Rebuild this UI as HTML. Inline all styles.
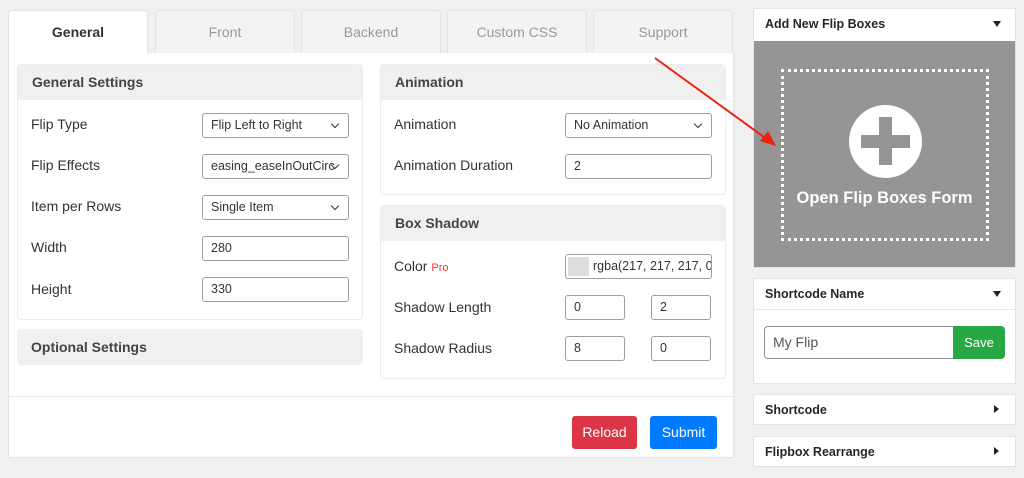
<!DOCTYPE html>
<html><head><style>
*{box-sizing:border-box}
body{margin:0;width:1024px;height:478px;background:#f0f0f1;font-family:"Liberation Sans",sans-serif;position:relative;overflow:hidden;color:#3c434a}
.a{position:absolute}
.tab{position:absolute;top:10px;height:43px;width:140px;background:#f3f3f3;border:1px solid #e3e3e3;border-bottom:none;border-radius:4px 4px 0 0;text-align:center;line-height:43px;font-size:14px;color:#999}
.box{position:absolute;background:#fff;border:1px solid #ececec;border-radius:4px}
.hd{background:#f0f0f0;height:35px;line-height:35px;padding-left:14px;font-weight:bold;font-size:14px;color:#444;border-radius:4px 4px 0 0}
.lb{position:absolute;font-size:14px;color:#333}
.in{position:absolute;height:25px;border:1px solid #9aa0a6;border-radius:3px;font-size:12.5px;line-height:23px;padding-left:8px;color:#333;background:#fff;white-space:nowrap;overflow:hidden}
.sel:after{content:"";position:absolute;right:10px;top:7px;width:5px;height:5px;border-right:1.5px solid #333;border-bottom:1.5px solid #333;transform:rotate(45deg)}
.rb{position:absolute;background:#fff;border:1px solid #e3e3e3;left:753px;width:263px}
.rh{height:31px;line-height:31px;padding-left:11px;font-size:12.5px;font-weight:bold;color:#23282d;position:relative}
.dn:after{content:"";position:absolute;right:14px;top:12px;border-left:4px solid transparent;border-right:4px solid transparent;border-top:6px solid #222}
.rt:after{content:"";position:absolute;right:16px;top:10px;border-top:4px solid transparent;border-bottom:4px solid transparent;border-left:5px solid #222}
</style></head><body>
<div class="a" style="left:8px;top:53px;width:726px;height:405px;background:#fff;border:1px solid #e3e3e3;border-top:none"></div>
<div class="tab" style="left:8px;background:#fff;color:#333;font-weight:bold;height:44px">General</div>
<div class="tab" style="left:155px">Front</div>
<div class="tab" style="left:301px">Backend</div>
<div class="tab" style="left:447px">Custom CSS</div>
<div class="tab" style="left:593px">Support</div>

<div class="box" style="left:17px;top:64px;width:346px;height:256px"><div class="hd">General Settings</div></div>
<div class="lb" style="left:31px;top:116px">Flip Type</div>
<div class="in sel" style="left:202px;top:113px;width:147px">Flip Left to Right</div>
<div class="lb" style="left:31px;top:157px">Flip Effects</div>
<div class="in sel" style="left:202px;top:154px;width:147px">easing_easeInOutCirc</div>
<div class="lb" style="left:31px;top:198px">Item per Rows</div>
<div class="in sel" style="left:202px;top:195px;width:147px">Single Item</div>
<div class="lb" style="left:31px;top:239px">Width</div>
<div class="in" style="left:202px;top:236px;width:147px">280</div>
<div class="lb" style="left:31px;top:281px">Height</div>
<div class="in" style="left:202px;top:277px;width:147px">330</div>
<div class="box" style="left:17px;top:329px;width:346px;height:36px;border:none"><div class="hd" style="border-radius:4px;height:36px;line-height:36px">Optional Settings</div></div>

<div class="box" style="left:380px;top:64px;width:346px;height:131px"><div class="hd">Animation</div></div>
<div class="lb" style="left:394px;top:116px">Animation</div>
<div class="in sel" style="left:565px;top:113px;width:147px">No Animation</div>
<div class="lb" style="left:394px;top:157px">Animation Duration</div>
<div class="in" style="left:565px;top:154px;width:147px">2</div>

<div class="box" style="left:380px;top:205px;width:346px;height:174px"><div class="hd">Box Shadow</div></div>
<div class="lb" style="left:394px;top:258px">Color <span style="color:#f33;font-size:11px">Pro</span></div>
<div class="in" style="left:565px;top:254px;width:147px;padding-left:2px"><span style="display:inline-block;width:21px;height:19px;background:#ddd;vertical-align:middle;margin-right:4px"></span>rgba(217, 217, 217, 0.7</div>
<div class="lb" style="left:394px;top:299px">Shadow Length</div>
<div class="in" style="left:565px;top:295px;width:60px">0</div>
<div class="in" style="left:651px;top:295px;width:60px">2</div>
<div class="lb" style="left:394px;top:340px">Shadow Radius</div>
<div class="in" style="left:565px;top:336px;width:60px">8</div>
<div class="in" style="left:651px;top:336px;width:60px">0</div>

<div class="a" style="left:8px;top:396px;width:726px;height:1px;background:#e5e5e5"></div>
<div class="a" style="left:572px;top:416px;width:65px;height:33px;background:#dc3545;border-radius:3px;color:#fff;font-size:14px;text-align:center;line-height:33px">Reload</div>
<div class="a" style="left:650px;top:416px;width:67px;height:33px;background:#007bff;border-radius:3px;color:#fff;font-size:14px;text-align:center;line-height:33px">Submit</div>

<div class="rb" style="top:8px;height:260px">
<div class="rh dn">Add New Flip Boxes</div>
<div class="a" style="left:0;top:32px;width:261px;height:226px;background:#959595"></div>
<div class="a" style="left:27px;top:60px;width:208px;height:172px;border:3px dotted #fff"></div>
<div class="a" style="left:95px;top:96px;width:73px;height:73px;border-radius:50%;background:#fff"></div>
<div class="a" style="left:125px;top:108px;width:13px;height:48px;background:#959595"></div>
<div class="a" style="left:107px;top:126px;width:49px;height:13px;background:#959595"></div>
<div class="a" style="left:0;top:180px;width:261px;text-align:center;color:#fff;font-weight:bold;font-size:16.5px">Open Flip Boxes Form</div>
</div>

<div class="rb" style="top:278px;height:106px">
<div class="rh dn" style="border-bottom:1px solid #e8e8e8">Shortcode Name</div>
<div class="a" style="left:10px;top:47px;width:190px;height:33px;border:1px solid #8c8f94;border-right:none;border-radius:4px 0 0 4px;font-size:14px;line-height:31px;padding-left:8px;color:#555">My Flip</div>
<div class="a" style="left:199px;top:47px;width:52px;height:33px;background:#28a745;border-radius:0 4px 4px 0;color:#fff;font-size:13px;text-align:center;line-height:33px">Save</div>
</div>
<div class="rb" style="top:394px;height:31px"><div class="rh rt">Shortcode</div></div>
<div class="rb" style="top:436px;height:31px"><div class="rh rt">Flipbox Rearrange</div></div>

<svg class="a" style="left:0;top:0" width="1024" height="478"><line x1="655" y1="58" x2="768" y2="140" stroke="#e21" stroke-width="2"/><polygon points="776,146 760,141 768,131" fill="#e21"/></svg>
</body></html>
